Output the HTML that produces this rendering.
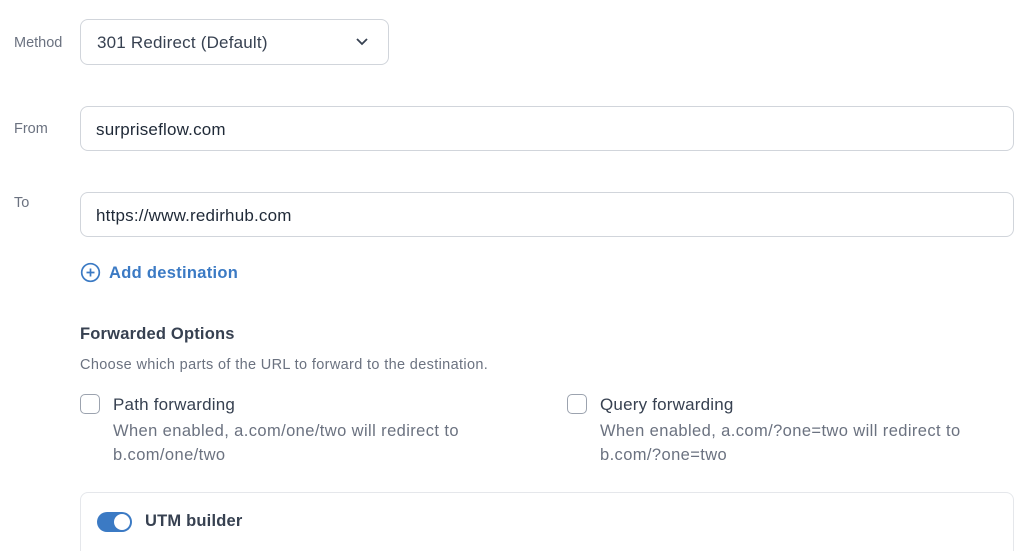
<!DOCTYPE html>
<html><head><style>
html,body{margin:0;width:1024px;height:551px;overflow:hidden}
body{background:#fff;font-family:"Liberation Sans",sans-serif;position:relative;color:#374151}
.a{position:absolute;white-space:nowrap}
.lbl{font-size:14.5px;color:#6b7280}
.box{border:1px solid #d1d5db;border-radius:8px;background:#fff;box-sizing:border-box}
.val{font-size:17px;color:#1f2937;letter-spacing:0.2px}
.cb{width:20px;height:20px;border:1.5px solid #9ca3af;border-radius:5px;box-sizing:border-box}
.t{font-size:17px;color:#374151;letter-spacing:0.2px}
.d{font-size:16.5px;color:#6b7280;line-height:24px;letter-spacing:0.4px}
</style></head><body>
<div class="a lbl" style="left:14px;top:35px">Method</div>
<div class="a box" style="left:80px;top:19px;width:309px;height:46px"></div>
<div class="a val" style="left:97px;top:33px;color:#374151">301 Redirect (Default)</div>
<svg class="a" style="left:355px;top:36px" width="14" height="12" viewBox="0 0 14 12"><path d="M2 3l5 5 5-5" fill="none" stroke="#374151" stroke-width="1.8"/></svg>
<div class="a lbl" style="left:14px;top:121px">From</div>
<div class="a box" style="left:80px;top:106px;width:934px;height:45px"></div>
<div class="a val" style="left:96px;top:120px">surpriseflow.com</div>
<div class="a lbl" style="left:14px;top:195px">To</div>
<div class="a box" style="left:80px;top:192px;width:934px;height:45px"></div>
<div class="a val" style="left:96px;top:206px">https://www.redirhub.com</div>
<svg class="a" style="left:80px;top:262px" width="21" height="21" viewBox="0 0 21 21"><circle cx="10.5" cy="10.5" r="8.8" fill="none" stroke="#3b7ac4" stroke-width="1.7"/><path d="M10.5 6.5v8M6.5 10.5h8" stroke="#3b7ac4" stroke-width="1.7"/></svg>
<div class="a" style="left:109px;top:264px;font-size:16.5px;font-weight:bold;color:#3b7ac4;letter-spacing:0.3px">Add destination</div>
<div class="a" style="left:80px;top:325px;font-size:16.5px;font-weight:bold;color:#374151;letter-spacing:0.2px">Forwarded Options</div>
<div class="a" style="left:80px;top:357px;font-size:14.5px;color:#6b7280;letter-spacing:0.35px">Choose which parts of the URL to forward to the destination.</div>
<div class="a cb" style="left:80px;top:394px"></div>
<div class="a t" style="left:113px;top:395px">Path forwarding</div>
<div class="a d" style="left:113px;top:419px">When enabled, a.com/one/two will redirect to<br>b.com/one/two</div>
<div class="a cb" style="left:567px;top:394px"></div>
<div class="a t" style="left:600px;top:395px">Query forwarding</div>
<div class="a d" style="left:600px;top:419px">When enabled, a.com/?one=two will redirect to<br>b.com/?one=two</div>
<div class="a box" style="left:80px;top:492px;width:934px;height:80px;border-color:#e5e7eb"></div>
<div class="a" style="left:97px;top:512px;width:35px;height:20px;border-radius:10px;background:#3b7ac4"></div>
<div class="a" style="left:114px;top:514px;width:16px;height:16px;border-radius:50%;background:#fff"></div>
<div class="a" style="left:145px;top:512px;font-size:16.5px;font-weight:bold;color:#374151;letter-spacing:0.2px">UTM builder</div>
</body></html>
